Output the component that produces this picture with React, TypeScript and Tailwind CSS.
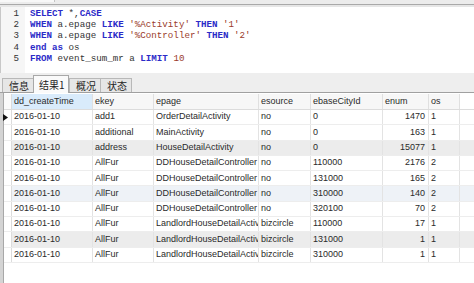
import React from 'react'

const KW = 'text-[#2b2bc8] font-bold'
const ID = 'text-[#333]'
const STR = 'text-[#9a3b2b]'

type Tok = [string, string]

const code: Tok[][] = [
  [['SELECT', KW], [' *,', ID], ['CASE', KW]],
  [['WHEN', KW], [' a.epage ', ID], ['LIKE', KW], [' ', ID], ["'%Activity'", STR], [' ', ID], ['THEN', KW], [' ', ID], ["'1'", STR]],
  [['WHEN', KW], [' a.epage ', ID], ['LIKE', KW], [' ', ID], ["'%Controller'", STR], [' ', ID], ['THEN', KW], [' ', ID], ["'2'", STR]],
  [['end', KW], [' ', ID], ['as', KW], [' os', ID]],
  [['FROM', KW], [' event_sum_mr a ', ID], ['LIMIT', KW], [' ', ID], ['10', STR]],
]

const cols = [
  { name: 'dd_createTime', w: 'w-[81px]', right: false },
  { name: 'ekey', w: 'w-[61px]', right: false },
  { name: 'epage', w: 'w-[105px]', right: false },
  { name: 'esource', w: 'w-[52px]', right: false },
  { name: 'ebaseCityId', w: 'w-[72px]', right: false },
  { name: 'enum', w: 'w-[46px]', right: true },
  { name: 'os', w: 'w-[31px]', right: false },
]

const rows = [
  ['2016-01-10', 'add1', 'OrderDetailActivity', 'no', '0', '1470', '1'],
  ['2016-01-10', 'additional', 'MainActivity', 'no', '0', '163', '1'],
  ['2016-01-10', 'address', 'HouseDetailActivity', 'no', '0', '15077', '1'],
  ['2016-01-10', 'AllFur', 'DDHouseDetailController', 'no', '110000', '2176', '2'],
  ['2016-01-10', 'AllFur', 'DDHouseDetailController', 'no', '131000', '165', '2'],
  ['2016-01-10', 'AllFur', 'DDHouseDetailController', 'no', '310000', '140', '2'],
  ['2016-01-10', 'AllFur', 'DDHouseDetailController', 'no', '320100', '70', '2'],
  ['2016-01-10', 'AllFur', 'LandlordHouseDetailActivity', 'bizcircle', '110000', '17', '1'],
  ['2016-01-10', 'AllFur', 'LandlordHouseDetailActivity', 'bizcircle', '131000', '1', '1'],
  ['2016-01-10', 'AllFur', 'LandlordHouseDetailActivity', 'bizcircle', '310000', '1', '1'],
]

const tabs = ['信息', '结果1', '概况', '状态']

function rowBg(i: number) {
  if (i === 2 || i === 8) return 'bg-[#ececec]'
  if (i === 5) return 'bg-[#eef2f7]'
  return 'bg-white'
}

export default function App() {
  return (
    <div className="w-[474px] h-[283px] overflow-hidden bg-white flex flex-col font-['Liberation_Sans',Arial,sans-serif]">
      {/* top strip */}
      <div className="h-[4px] bg-[#ececec] flex">
        <div className="w-[55px] h-[2px] bg-[#f8f8f8] border-r border-[#c4c4c4]" />
      </div>
      <div className="h-[1px] bg-[#a9a9a9]" />
      <div className="h-[2px] bg-[#e6e6e6]" />

      {/* editor */}
      <div className="h-[66px] flex border-l border-[#c8c8c8] font-['Liberation_Mono',monospace] text-[9.2px] leading-[11.2px]">
        <div className="w-[24px] bg-[#f6f6f6] pt-[1px] pr-[6px] text-right text-[#333]">
          {code.map((_, i) => (
            <div key={i}>{i + 1}</div>
          ))}
        </div>
        <div className="pl-[5px] pt-[1px] whitespace-pre">
          {code.map((line, i) => (
            <div key={i}>
              {line.map(([t, c], j) => (
                <span key={j} className={c}>{t}</span>
              ))}
            </div>
          ))}
        </div>
      </div>

      {/* result tabs */}
      <div className="h-[20px] bg-[#eeeeee] flex items-end pl-[2px] border-b border-[#a0a0a0] font-['Noto_Sans_CJK_SC',sans-serif] text-[10px] text-[#222]">
        {tabs.map((t, i) =>
          i === 1 ? (
            <div key={t} className="h-[18px] w-[36px] -mb-px bg-[#fafafa] border border-b-0 border-[#a8a8a8] pl-[5px] leading-[17px]">
              {t}
            </div>
          ) : (
            <div key={t} className={`h-[14px] ${i === 0 ? 'w-[32px]' : 'w-[32px]'} bg-[#e6e6e6] border border-b-0 border-[#b8b8b8] pl-[6px] leading-[13px] mr-[-1px]`}>
              {t}
            </div>
          )
        )}
      </div>

      {/* grid */}
      <div className="flex-1 flex min-h-0">
        <div className="w-[3px] bg-[#d4d4d4]" />
        <div className="w-[1px] bg-[#a8a8a8]" />
        <div className="flex-1 pt-[1px] text-[9px] text-[#2a2a2a]">
          <div className="flex h-[16px] items-center border-b border-[#dcdcdc]">
            <div className="w-[8px] h-full border-r border-[#dcdcdc] bg-[#fafafa]" />
            {cols.map((c, i) => (
              <div
                key={c.name}
                className={`${c.w} h-full flex items-center pl-[2px] border-r border-[#e0e0e0] whitespace-nowrap overflow-hidden ${i === 0 ? 'bg-[#d9ebfb]' : 'bg-[#f7f7f7]'}`}
              >
                {c.name}
              </div>
            ))}
          </div>
          {rows.map((r, ri) => (
            <div key={ri} className={`flex h-[15.3px] border-b border-[#ededed] ${rowBg(ri)}`}>
              <div className="w-[8px] h-full border-r border-[#dcdcdc] bg-white flex items-center">
                {ri === 0 && (
                  <svg width="5" height="7" viewBox="0 0 5 7" className="-ml-[1px]">
                    <path d="M0 0 L5 3.5 L0 7 Z" fill="#111" />
                  </svg>
                )}
              </div>
              {cols.map((c, ci) => (
                <div
                  key={ci}
                  className={`${c.w} h-full flex items-center border-r border-[#e3e3e3] whitespace-nowrap overflow-hidden ${c.right ? 'justify-end pr-[3px]' : 'pl-[2px]'}`}
                >
                  {r[ci]}
                </div>
              ))}
            </div>
          ))}
        </div>
      </div>
    </div>
  )
}
